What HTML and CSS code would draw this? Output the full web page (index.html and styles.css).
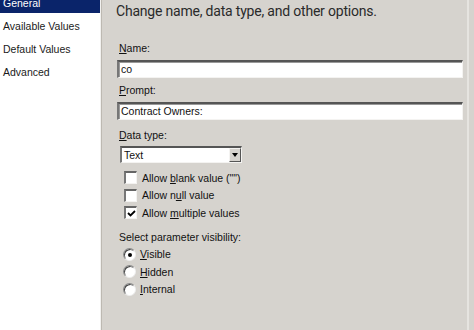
FILE: index.html
```html
<!DOCTYPE html>
<html>
<head>
<meta charset="utf-8">
<link rel="stylesheet" href="styles.css">
</head>
<body>
<div class="window">
  <nav class="sidebar">
    <div class="nav-item selected">General</div>
    <div class="nav-item">Available Values</div>
    <div class="nav-item">Default Values</div>
    <div class="nav-item">Advanced</div>
  </nav>
  <main class="panel">
    <h1 class="heading">Change name, data type, and other options.</h1>
    <div class="field name-field">
      <label class="label"><u>N</u>ame:</label>
      <div class="textbox">co</div>
    </div>
    <div class="field prompt-field">
      <label class="label"><u>P</u>rompt:</label>
      <div class="textbox">Contract Owners:</div>
    </div>
    <div class="field type-field">
      <label class="label"><u>D</u>ata type:</label>
      <div class="select">
        <span class="select-text">Text</span>
        <span class="select-btn"><span class="arrow"></span></span>
      </div>
    </div>
    <div class="checks">
      <div class="check-row"><span class="checkbox"></span><span>Allow <u>b</u>lank value ("")</span></div>
      <div class="check-row"><span class="checkbox"></span><span>Allow n<u>u</u>ll value</span></div>
      <div class="check-row"><span class="checkbox checked"><svg viewBox="0 0 9 9" width="9" height="9"><path d="M1 4 L3.5 6.5 L8 2" fill="none" stroke="#000" stroke-width="1.8"/></svg></span><span>Allow <u>m</u>ultiple values</span></div>
    </div>
    <div class="label vis-label">Select parameter visibility:</div>
    <div class="radios">
      <div class="radio-row"><span class="radio on"></span><span><u>V</u>isible</span></div>
      <div class="radio-row"><span class="radio"></span><span><u>H</u>idden</span></div>
      <div class="radio-row"><span class="radio"></span><span><u>I</u>nternal</span></div>
    </div>
  </main>
</div>
</body>
</html>
```

FILE: styles.css
```css
html, body {
  margin: 0;
  padding: 0;
  width: 474px;
  height: 330px;
  overflow: hidden;
  background: #d6d3ce;
}
body {
  font-family: "Liberation Sans", Arial, sans-serif;
  font-size: 10.5px;
  color: #111;
}
.window {
  display: flex;
  height: 330px;
}
.sidebar {
  width: 100px;
  background: #fff;
  border-right: 1px solid #f2f1ef;
  box-shadow: 1px 0 0 #bdb9b2;
  display: flex;
  flex-direction: column;
  margin-top: -10px;
  padding-bottom: 10px;
}
.nav-item {
  height: 23px;
  line-height: 27px;
  padding-left: 3px;
  color: #1a1a1a;
}
.nav-item.selected {
  background: #0a246a;
  color: #fff;
}
.panel {
  flex: 1;
  display: flex;
  flex-direction: column;
  padding: 0 4px 0 15px;
  margin-left: 1px;
  border-right: 2px solid #e6e4e0;
  margin-right: 5px;
}
.heading {
  margin: 2px 0 0 -1px;
  font-family: Roboto, "Noto Sans", sans-serif;
  font-weight: normal;
  font-size: 14px;
  letter-spacing: -0.2px;
  line-height: 18px;
  color: #2a2a2a;
}
.field {
  display: flex;
  flex-direction: column;
}
.name-field { margin-top: 22px; }
.prompt-field { margin-top: 6px; }
.type-field { margin-top: 9px; }
.label {
  line-height: 13px;
  margin-bottom: 5px;
  margin-left: 2px;
}
.type-field .label { margin-bottom: 4px; }
.textbox {
  height: 15px;
  line-height: 15px;
  padding: 0 2px;
  background: #fff;
  border-top: 2px solid #555;
  border-left: 2px solid #777;
  border-right: 1px solid #f4f3f1;
  border-bottom: 1px solid #f4f3f1;
  box-shadow: inset 1px 1px 0 #999;
}
.select {
  width: 119px;
  height: 14px;
  background: #fff;
  border-top: 2px solid #555;
  border-left: 2px solid #777;
  border-right: 1px solid #f4f3f1;
  border-bottom: 1px solid #f4f3f1;
  display: flex;
  align-items: stretch;
  margin-left: 3px;
}
.select-text {
  flex: 1;
  padding-left: 2px;
  line-height: 14px;
}
.select-btn {
  width: 12px;
  background: #d6d3ce;
  border-top: 1px solid #f4f3f1;
  border-left: 1px solid #f4f3f1;
  border-right: 1px solid #555;
  border-bottom: 1px solid #555;
  box-sizing: border-box;
  display: flex;
  align-items: center;
  justify-content: center;
}
.arrow {
  width: 0;
  height: 0;
  border-left: 3.5px solid transparent;
  border-right: 3.5px solid transparent;
  border-top: 4px solid #000;
}
.checks {
  display: flex;
  flex-direction: column;
  margin-top: 8px;
  padding-left: 7px;
  gap: 4px;
}
.check-row, .radio-row {
  display: flex;
  align-items: center;
  gap: 5px;
  height: 13.5px;
}
.checkbox {
  width: 10px;
  height: 10px;
  background: #fff;
  border-top: 2px solid #666;
  border-left: 2px solid #777;
  border-right: 1px solid #f4f3f1;
  border-bottom: 1px solid #f4f3f1;
  display: flex;
  align-items: center;
  justify-content: center;
}
.vis-label {
  margin-top: 11px;
  margin-left: 2px;
  margin-bottom: 4px;
}
.radios {
  display: flex;
  flex-direction: column;
  gap: 4px;
  padding-left: 6px;
}
.radio-row { gap: 4px; }
.radio {
  width: 11px;
  height: 11px;
  border-radius: 50%;
  background: #fff;
  border: 1px solid #888;
  border-right-color: #eee;
  border-bottom-color: #eee;
  box-shadow: inset 1px 1px 0 #444;
  position: relative;
}
.radio.on::after {
  content: "";
  position: absolute;
  left: 4px;
  top: 4px;
  width: 4px;
  height: 4px;
  border-radius: 50%;
  background: #000;
}
```
